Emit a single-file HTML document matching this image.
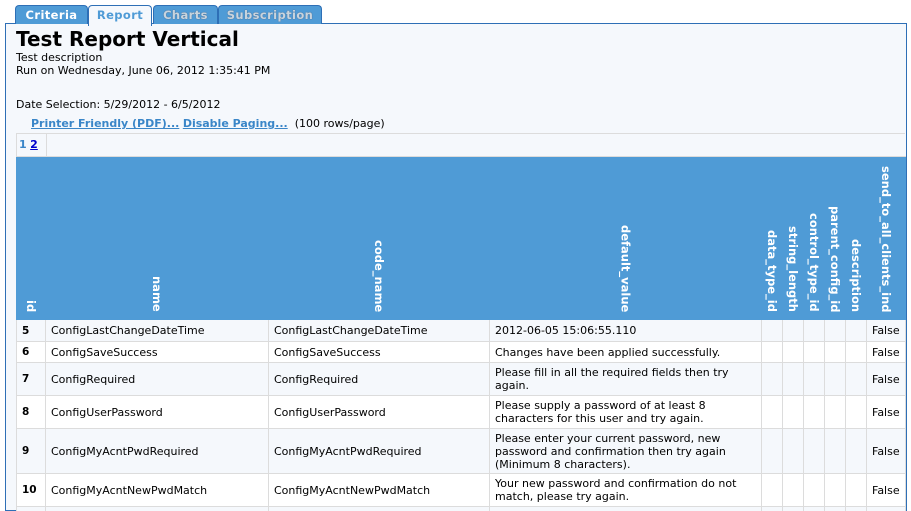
<!DOCTYPE html>
<html><head><style>
html,body{margin:0;width:911px;height:511px;overflow:hidden}
body{background:#fff;font-family:"DejaVu Sans",Verdana,sans-serif;font-size:11px;color:#000;position:relative}
.tab{position:absolute;top:5px;height:18px;background:#4f9bd6;border:1px solid #2e6fb6;border-bottom:none;border-radius:4px 4px 0 0;color:#fff;font-weight:bold;font-size:11.5px;text-align:center;line-height:18px;letter-spacing:0.4px}
.tab.g{color:#c8d4de;text-shadow:0 0 1px #556}
.tab.a{background:#f5f8fc;color:#4f9bd6;top:5px;height:20px;z-index:2}
.panel{position:absolute;left:5px;top:23px;width:900px;height:486px;border:1px solid #2e6fb6;background:#f5f8fc}
h1{position:absolute;left:16px;top:27px;margin:0;font-size:20px;font-weight:bold;font-family:"DejaVu Sans",Verdana,sans-serif}
.t{position:absolute;left:16px;white-space:nowrap}
a{color:#3a86c8;font-weight:bold;text-decoration:underline}
table{position:absolute;left:16px;top:133px;border-collapse:collapse;table-layout:fixed}
td,th{border:1px solid #dcdcdc;padding:0 5px;white-space:nowrap}
th{background:#4f9bd6;color:#fff;font-weight:bold;font-size:11.5px;border-color:#4f9bd6;vertical-align:bottom;padding:4px 0}
th span{writing-mode:vertical-rl;display:inline-block}
td{background:#fff}
tr.o td{background:#f5f8fc}
td.n{font-weight:bold;font-size:10.5px}
td.w{white-space:normal;line-height:13px}
</style></head><body>
<div class="panel"></div>
<div class="tab" style="left:15px;width:71px">Criteria</div>
<div class="tab a" style="left:88px;width:62px">Report</div>
<div class="tab g" style="left:153px;width:63px">Charts</div>
<div class="tab g" style="left:218px;width:102px">Subscription</div>
<h1>Test Report Vertical</h1>
<div class="t" style="top:51px">Test description</div>
<div class="t" style="top:64px">Run on Wednesday, June 06, 2012 1:35:41 PM</div>
<div class="t" style="top:98px">Date Selection: 5/29/2012 - 6/5/2012</div>
<div class="t" style="top:117px;left:31px"><a>Printer Friendly (PDF)...</a> <a>Disable Paging...</a> &nbsp;(100 rows/page)</div>
<table>
<colgroup><col style="width:29px"><col style="width:223px"><col style="width:221px"><col style="width:272px"><col style="width:21px"><col style="width:21px"><col style="width:21px"><col style="width:21px"><col style="width:21px"><col style="width:38px"></colgroup>
<tr style="height:23px"><td colspan="10" style="background:#f5f8fc;padding-left:2px;border-right-color:#f5f8fc;border-top:1px solid #dcdcdc"><span style="display:inline-block;width:27px;border-right:1px solid #dcdcdc;height:22px;line-height:22px"><b style="color:#3a86c8">1</b> <a style="color:#0000cc">2</a></span></td></tr>
<tr style="height:163px">
<th><span>id</span></th><th><span>name</span></th><th><span>code_name</span></th><th><span>default_value</span></th><th><span>data_type_id</span></th><th><span>string_length</span></th><th><span>control_type_id</span></th><th><span>parent_config_id</span></th><th><span>description</span></th><th><span>send_to_all_clients_ind</span></th></tr>
<tr class="o" style="height:22px"><td class="n">5</td><td>ConfigLastChangeDateTime</td><td>ConfigLastChangeDateTime</td><td>2012-06-05 15:06:55.110</td><td></td><td></td><td></td><td></td><td></td><td>False</td></tr>
<tr style="height:21px"><td class="n">6</td><td>ConfigSaveSuccess</td><td>ConfigSaveSuccess</td><td>Changes have been applied successfully.</td><td></td><td></td><td></td><td></td><td></td><td>False</td></tr>
<tr class="o" style="height:33px"><td class="n">7</td><td>ConfigRequired</td><td>ConfigRequired</td><td class="w">Please fill in all the required fields then try again.</td><td></td><td></td><td></td><td></td><td></td><td>False</td></tr>
<tr style="height:33px"><td class="n">8</td><td>ConfigUserPassword</td><td>ConfigUserPassword</td><td class="w">Please supply a password of at least 8 characters for this user and try again.</td><td></td><td></td><td></td><td></td><td></td><td>False</td></tr>
<tr class="o" style="height:45px"><td class="n">9</td><td>ConfigMyAcntPwdRequired</td><td>ConfigMyAcntPwdRequired</td><td class="w">Please enter your current password, new password and confirmation then try again (Minimum 8 characters).</td><td></td><td></td><td></td><td></td><td></td><td>False</td></tr>
<tr style="height:33px"><td class="n">10</td><td>ConfigMyAcntNewPwdMatch</td><td>ConfigMyAcntNewPwdMatch</td><td class="w">Your new password and confirmation do not match, please try again.</td><td></td><td></td><td></td><td></td><td></td><td>False</td></tr>
<tr class="o" style="height:20px"><td></td><td></td><td></td><td></td><td></td><td></td><td></td><td></td><td></td><td></td></tr>
</table>
</body></html>
